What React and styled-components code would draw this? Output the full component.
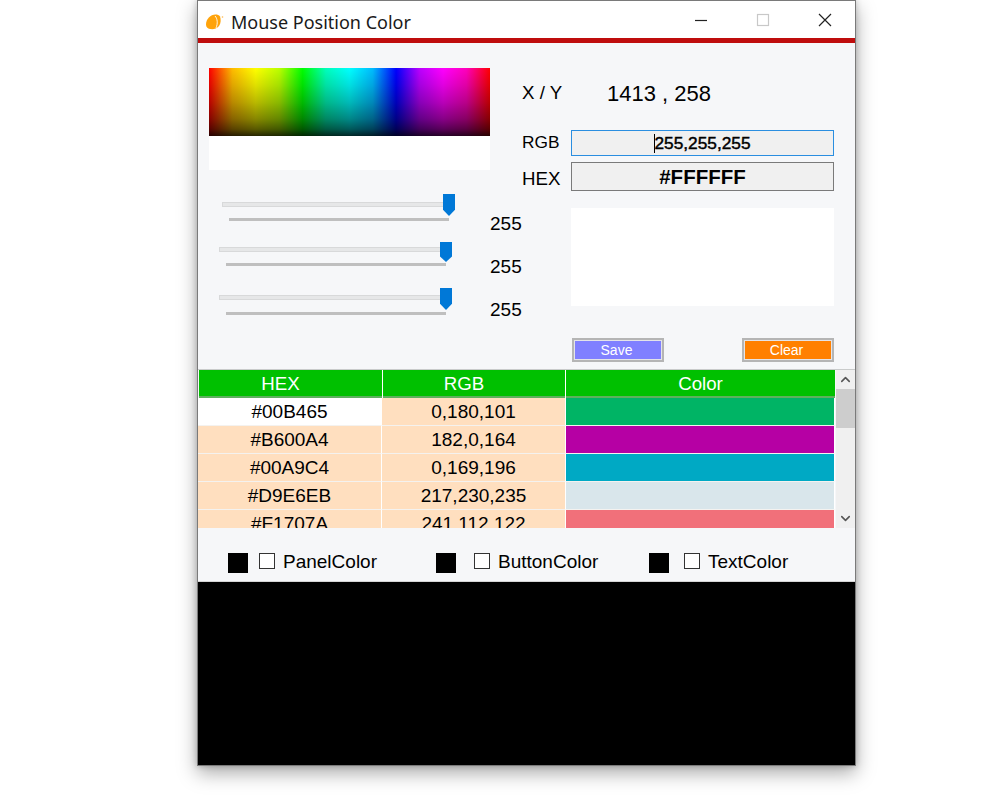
import React from 'react';
import styled, { createGlobalStyle } from 'styled-components';
import { ChevronUp, ChevronDown } from 'lucide-react';

const GlobalStyle = createGlobalStyle`
  html, body {
    margin: 0;
    background: #fff;
  }
  * {
    box-sizing: border-box;
  }
`;

const Page = styled.div`
  height: 795px;
  padding-left: 197px;
  overflow: hidden;
`;

const Window = styled.div`
  width: 659px;
  height: 766px;
  display: flex;
  flex-direction: column;
  border: 1px solid #7a7a7a;
  background: #f6f7f9;
  box-shadow: 0 7px 18px rgba(0, 0, 0, 0.34), 0 0 6px rgba(0, 0, 0, 0.2);
  font-family: "Liberation Sans", Arial, sans-serif;
  color: #000;
`;

const TitleBar = styled.div`
  height: 42px;
  flex: none;
  display: flex;
  align-items: center;
  padding: 4px 0 0 7px;
  background: #fff;
  border-bottom: 5px solid #bf0d0d;
`;

const Title = styled.span`
  margin-left: 7px;
  font-family: "Noto Sans", "Open Sans", sans-serif;
  font-size: 18px;
  color: #1a1a1a;
`;

const Controls = styled.div`
  margin-left: auto;
  margin-right: -1px;
  margin-top: -3px;
  display: grid;
  grid-template-columns: 62px 62px 62px;
`;

const ControlIcon = styled.svg`
  width: 14px;
  height: 14px;
  justify-self: center;
  fill: none;
  stroke: ${p => p.$stroke || '#222'};
  stroke-width: 1.2;
`;

const Top = styled.div`
  flex: none;
  height: 326px;
  display: grid;
  grid-template-columns: 324px 1fr;
`;

const LeftCol = styled.div`
  padding-top: 25px;
`;

const Spectrum = styled.div`
  width: 281px;
  height: 102px;
  margin-left: 11px;
  margin-bottom: 24px;
  background: #fff;
`;

const SpectrumFill = styled.div`
  height: 68px;
  background:
    linear-gradient(to bottom, rgba(0, 0, 0, 0) 0%, rgba(0, 0, 0, 0.12) 25%, rgba(0, 0, 0, 0.27) 50%, rgba(0, 0, 0, 0.47) 75%, rgba(0, 0, 0, 0.65) 90%, rgba(0, 0, 0, 0.85) 100%),
    linear-gradient(to right, #f00 0%, #fb0 8.3%, #ff0 16.6%, #bf0 25%, #0f0 33.3%, #0fb 41.6%, #0ff 50%, #0bf 58.3%, #00f 66.6%, #b0f 75%, #f0f 83.3%, #f0b 91.6%, #f00 100%);
`;

const SliderRow = styled.div`
  height: ${p => p.$height}px;
  display: grid;
  grid-template-columns: 292px auto;
`;

const Slider = styled.div`
  position: relative;
  margin-left: ${p => p.$indent}px;
  padding-top: ${p => p.$trackTop}px;
`;

const Track = styled.div`
  width: 224px;
  height: 5px;
  background: #e6e7e8;
  border: 1px solid #d8d9da;
`;

const Ticks = styled.div`
  width: 220px;
  height: 3px;
  margin-top: ${p => p.$gap}px;
  margin-left: 7px;
  background: #bfbfbf;
`;

const Thumb = styled.div`
  position: absolute;
  top: 0;
  left: 221px;
  width: 12px;
  height: ${p => p.$height}px;
  background: #0078d7;
  clip-path: polygon(0 0, 100% 0, 100% 72%, 50% 100%, 0 72%);
`;

const SliderValue = styled.div`
  margin-top: ${p => p.$top}px;
  font-size: 19px;
  line-height: 22px;
`;

const RightCol = styled.div`
  padding-right: 21px;
`;

const PositionRow = styled.div`
  height: 87px;
  padding-top: 39px;
  display: flex;
`;

const Label = styled.div`
  width: 49px;
  flex: none;
  position: relative;
  top: ${p => p.$shift || 0}px;
  font-size: ${p => p.$size || 18.7}px;
  line-height: 22px;
`;

const PositionValue = styled.div`
  margin-left: 36px;
  margin-top: -1px;
  font-size: 22px;
  line-height: 26px;
`;

const FieldRow = styled.div`
  display: flex;
  align-items: center;
  height: ${p => p.$height}px;
  margin-bottom: ${p => p.$bottom || 0}px;
`;

const Field = styled.div`
  width: 263px;
  height: 100%;
  display: flex;
  align-items: center;
  justify-content: center;
  background: #f0f0f0;
  border: 1px solid ${p => (p.$focused ? '#2a8ee0' : '#7a7a7a')};
  font-weight: ${p => (p.$focused ? 'normal' : 'bold')};
  font-size: ${p => p.$size}px;
  -webkit-text-stroke: ${p => (p.$focused ? '0.45px #000' : '0')};
`;

const Caret = styled.span`
  width: 1px;
  height: 19px;
  margin-right: -1px;
  background: #000;
`;

const Preview = styled.div`
  width: 263px;
  height: 98px;
  margin: 17px 0 32px 49px;
  background: #fff;
`;

const Buttons = styled.div`
  width: 262px;
  margin-left: 50px;
  display: flex;
  justify-content: space-between;
`;

const ActionButton = styled.button`
  width: 92px;
  height: 24px;
  padding: 0 3px 0 0;
  border: 2px solid #b5b5b5;
  box-shadow: inset 0 0 0 1px #e4e4e8;
  background: ${p => p.$color};
  color: #fff;
  font-family: inherit;
  font-size: 14px;
`;

const TableWrap = styled.div`
  flex: none;
  height: 159px;
  display: flex;
  border-top: 1px solid #c9cbcb;
`;

const Table = styled.div`
  width: 637px;
  height: 100%;
  overflow: hidden;
`;

const HeaderRow = styled.div`
  height: 28px;
  margin-left: 1px;
  display: grid;
  grid-template-columns: 184px 183px 1fr;
  background: #00c000;
  border-bottom: 2px solid #5eb05e;
`;

const HeaderCell = styled.div`
  padding-right: ${p => (p.$shift ? 20 : 0)}px;
  text-align: center;
  color: #fff;
  font-size: 18.7px;
  line-height: 28px;
  border-right: ${p => (p.$last ? 0 : '1px solid #fff')};
`;

const Row = styled.div`
  height: 28px;
  display: grid;
  grid-template-columns: 184px 184px 1fr;
`;

const Cell = styled.div`
  text-align: center;
  font-size: 19px;
  line-height: 27px;
  background: ${p => p.$bg};
  border-right: 1px solid #fff;
  border-bottom: 1px solid #f4f2ef;
`;

const Scrollbar = styled.div`
  width: 19px;
  margin-left: 1px;
  display: flex;
  flex-direction: column;
  align-items: center;
  background: #f0f0f0;
  color: #555;
`;

const ScrollArrow = styled.div`
  height: 19px;
  display: flex;
  align-items: center;
`;

const ScrollThumb = styled.div`
  width: 100%;
  height: 39px;
  margin-bottom: auto;
  background: #cdcdcd;
`;

const OptionsBar = styled.div`
  flex: none;
  height: 53px;
  padding: 25px 0 0 30px;
  display: grid;
  grid-template-columns: 208px 213px 1fr;
`;

const Option = styled.label`
  display: flex;
  align-items: flex-start;
`;

const Swatch = styled.span`
  width: 20px;
  height: 20px;
  margin-right: ${p => p.$gap}px;
  background: #000;
`;

const CheckBox = styled.span`
  width: 16px;
  height: 16px;
  margin-right: 8px;
  background: #fff;
  border: 1px solid #333;
`;

const OptionText = styled.span`
  margin-top: -2px;
  font-size: 19px;
  line-height: 22px;
`;

const BlackPanel = styled.div`
  flex: 1;
  background: #000;
  border-top: 1px solid #d5d5d5;
`;

const sliders = [
  { height: 48, indent: 24, trackTop: 8, gap: 11, thumb: 22, valueTop: 19 },
  { height: 46, indent: 21, trackTop: 5, gap: 11, thumb: 20, valueTop: 14 },
  { height: 46, indent: 21, trackTop: 7, gap: 12, thumb: 22, valueTop: 11 },
];

const rows = [
  { hex: '#00B465', rgb: '0,180,101', color: '#00b465', first: true },
  { hex: '#B600A4', rgb: '182,0,164', color: '#b600a4' },
  { hex: '#00A9C4', rgb: '0,169,196', color: '#00a9c4' },
  { hex: '#D9E6EB', rgb: '217,230,235', color: '#d9e6eb' },
  { hex: '#F1707A', rgb: '241,112,122', color: '#f1707a' },
];

const options = [
  { label: 'PanelColor', gap: 11 },
  { label: 'ButtonColor', gap: 18 },
  { label: 'TextColor', gap: 15 },
];

const PEACH = '#ffdfbf';

const Logo = () => (
  <svg width="19" height="18" viewBox="0 0 19 18">
    <path d="M1 11.500C1 6 5.500 1.500 10.500 1.500c2 0 3.500.5 4.500 2 1 2.500 1 7-1 9.500-2.500 3-6 3.500-9 3C2.500 15.500 1 14 1 11.500z" fill="#ffa30a" />
    <path d="M10 3c2.500 2.500 3 7.500 1 12" fill="none" stroke="#fff" strokeWidth="0.9" />
    <circle cx="17.500" cy="4" r="0.8" fill="#ffb84a" />
  </svg>
);

export default function App() {
  return (
    <Page>
      <GlobalStyle />
      <Window>
        <TitleBar>
          <Logo />
          <Title>Mouse Position Color</Title>
          <Controls>
            <ControlIcon viewBox="0 0 14 14"><path d="M1 7.500h12" /></ControlIcon>
            <ControlIcon viewBox="0 0 14 14" $stroke="#c8c8c8"><rect x="1.500" y="1.500" width="11" height="11" /></ControlIcon>
            <ControlIcon viewBox="0 0 14 14"><path d="M1 1l12 12M13 1L1 13" /></ControlIcon>
          </Controls>
        </TitleBar>

        <Top>
          <LeftCol>
            <Spectrum>
              <SpectrumFill />
            </Spectrum>
            {sliders.map((s, i) => (
              <SliderRow key={i} $height={s.height}>
                <Slider $indent={s.indent} $trackTop={s.trackTop}>
                  <Track />
                  <Ticks $gap={s.gap} />
                  <Thumb $height={s.thumb} />
                </Slider>
                <SliderValue $top={s.valueTop}>255</SliderValue>
              </SliderRow>
            ))}
          </LeftCol>

          <RightCol>
            <PositionRow>
              <Label>X / Y</Label>
              <PositionValue>1413 , 258</PositionValue>
            </PositionRow>
            <FieldRow $height={26} $bottom={6}>
              <Label $size={17.300} $shift={-1}>RGB</Label>
              <Field $focused $size={17.300}><Caret />255,255,255</Field>
            </FieldRow>
            <FieldRow $height={29}>
              <Label $shift={2}>HEX</Label>
              <Field $size={20.500}>#FFFFFF</Field>
            </FieldRow>
            <Preview />
            <Buttons>
              <ActionButton $color="#8080ff">Save</ActionButton>
              <ActionButton $color="#ff8000">Clear</ActionButton>
            </Buttons>
          </RightCol>
        </Top>

        <TableWrap>
          <Table>
            <HeaderRow>
              <HeaderCell $shift>HEX</HeaderCell>
              <HeaderCell $shift>RGB</HeaderCell>
              <HeaderCell $last>Color</HeaderCell>
            </HeaderRow>
            {rows.map(r => (
              <Row key={r.hex}>
                <Cell $bg={r.first ? '#fff' : PEACH}>{r.hex}</Cell>
                <Cell $bg={PEACH}>{r.rgb}</Cell>
                <Cell $bg={r.color} />
              </Row>
            ))}
          </Table>
          <Scrollbar>
            <ScrollArrow><ChevronUp size={15} strokeWidth={2.500} /></ScrollArrow>
            <ScrollThumb />
            <ScrollArrow><ChevronDown size={15} strokeWidth={2.500} /></ScrollArrow>
          </Scrollbar>
        </TableWrap>

        <OptionsBar>
          {options.map(o => (
            <Option key={o.label}>
              <Swatch $gap={o.gap} />
              <CheckBox />
              <OptionText>{o.label}</OptionText>
            </Option>
          ))}
        </OptionsBar>

        <BlackPanel />
      </Window>
    </Page>
  );
}
